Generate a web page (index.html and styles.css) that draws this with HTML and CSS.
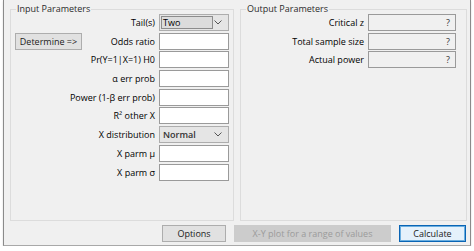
FILE: index.html
```html
<!DOCTYPE html>
<html>
<head>
<meta charset="utf-8">
<link rel="stylesheet" href="styles.css">
</head>
<body>
<div class="window">
  <div class="groups">
    <fieldset class="group group-in">
      <legend>Input Parameters</legend>
      <div class="form">
        <div class="label">Tail(s)</div>
        <div class="combo focus"><span class="sel">Two</span><svg class="chev" width="8" height="5" viewBox="0 0 8 5"><path d="M0.5 0.5 L4 4 L7.5 0.5" fill="none" stroke="#555" stroke-width="1"/></svg></div>

        <div class="label split"><button class="btn det">Determine =&gt;</button><span>Odds ratio</span></div>
        <div class="field"></div>

        <div class="label">Pr(Y=1|X=1) H0</div>
        <div class="field"></div>

        <div class="label">α err prob</div>
        <div class="field"></div>

        <div class="label">Power (1-β err prob)</div>
        <div class="field"></div>

        <div class="label">R² other X</div>
        <div class="field"></div>

        <div class="label">X distribution</div>
        <div class="combo"><span class="sel plain">Normal</span><svg class="chev" width="8" height="5" viewBox="0 0 8 5"><path d="M0.5 0.5 L4 4 L7.5 0.5" fill="none" stroke="#555" stroke-width="1"/></svg></div>

        <div class="label">X parm μ</div>
        <div class="field"></div>

        <div class="label">X parm σ</div>
        <div class="field"></div>
      </div>
    </fieldset>
    <fieldset class="group group-out">
      <legend>Output Parameters</legend>
      <div class="oform">
        <div class="label">Critical z</div>
        <div class="ofield">?</div>
        <div class="label">Total sample size</div>
        <div class="ofield">?</div>
        <div class="label">Actual power</div>
        <div class="ofield">?</div>
      </div>
    </fieldset>
  </div>
  <div class="actions">
    <button class="btn opt">Options</button>
    <button class="btn xy" disabled>X-Y plot for a range of values</button>
    <button class="btn calc">Calculate</button>
  </div>
</div>
</body>
</html>
```
FILE: styles.css
```css
html, body {
  margin: 0;
  padding: 0;
  background: #ffffff;
}
body {
  font-family: "Open Sans", "Noto Sans", sans-serif;
  font-size: 9px;
  color: #000000;
}
.window {
  margin-left: 3px;
  width: 466px;
  height: 245px;
  background: #f0f0f0;
  border-left: 1px solid #8a8a8a;
  border-right: 1px solid #8a8a8a;
  border-bottom: 1px solid #a8a8a8;
  box-shadow: 0 1px 2px rgba(0,0,0,0.15);
  display: flex;
  flex-direction: column;
}
.groups {
  display: flex;
  gap: 6px;
  padding: 3px 3px 0 6px;
}
.group {
  margin: 0;
  border: 1px solid #dcdcdc;
  height: 218px;
  box-sizing: border-box;
  padding: 0;
  min-width: 0;
}
.group legend {
  padding: 0 1px;
  margin-left: 5px;
  color: #2b2b2b;
  line-height: 12px;
}
.group-in {
  width: 224px;
}
.group-out {
  width: 227px;
}
.form {
  display: grid;
  grid-template-columns: 1fr 70px;
  grid-auto-rows: 17px;
  row-gap: 1.7px;
  column-gap: 4px;
  padding: 0 4px 0 4px;
  margin-top: -1px;
  align-items: center;
}
.label {
  text-align: right;
  white-space: nowrap;
  line-height: 17px;
}
.label.split {
  display: flex;
  justify-content: space-between;
  align-items: center;
}
.field {
  height: 17px;
  box-sizing: border-box;
  background: #ffffff;
  border: 1px solid #9a9a9a;
}
.combo {
  height: 17px;
  box-sizing: border-box;
  background: #e5e5e5;
  border: 1px solid #adadad;
  display: flex;
  align-items: center;
  padding: 0 6px 0 1px;
  justify-content: space-between;
}
.sel {
  height: 13px;
  line-height: 11px;
  box-sizing: border-box;
  width: 52px;
  border: 1px solid #8c8c8c;
  background: #dcdcdc;
  padding-left: 1px;
  color: #000;
}
.sel.plain {
  border-color: transparent;
  background: transparent;
  font-weight: 600;
  color: #333;
}
.chev {
  display: block;
}
.oform {
  display: grid;
  grid-template-columns: 1fr 88px;
  grid-auto-rows: 17px;
  row-gap: 1.7px;
  column-gap: 4px;
  padding: 0 10px 0 4px;
  margin-top: -1px;
  align-items: center;
}
.ofield {
  height: 17px;
  box-sizing: border-box;
  background: #f0f0f0;
  border: 1px solid #9a9a9a;
  text-align: right;
  padding-right: 5px;
  line-height: 15px;
  color: #333;
}
.btn {
  font-family: inherit;
  font-size: 9px;
  height: 17px;
  box-sizing: border-box;
  background: #e1e1e1;
  border: 1px solid #adadad;
  color: #1a1a1a;
  padding: 0;
  margin: 0;
}
.det {
  width: 67px;
  display: block;
}
.actions {
  display: flex;
  justify-content: flex-end;
  gap: 8px;
  padding: 4px 4px 0 0;
}
.opt {
  width: 64px;
}
.xy {
  width: 157px;
  background: #cccccc;
  border-color: #cccccc;
  color: #9b9b9b;
}
.calc {
  width: 67px;
  border: 1px solid #0a64b4;
  box-shadow: inset 0 0 0 1px #6aaee0;
  background: #e5f1fb;
}
```
